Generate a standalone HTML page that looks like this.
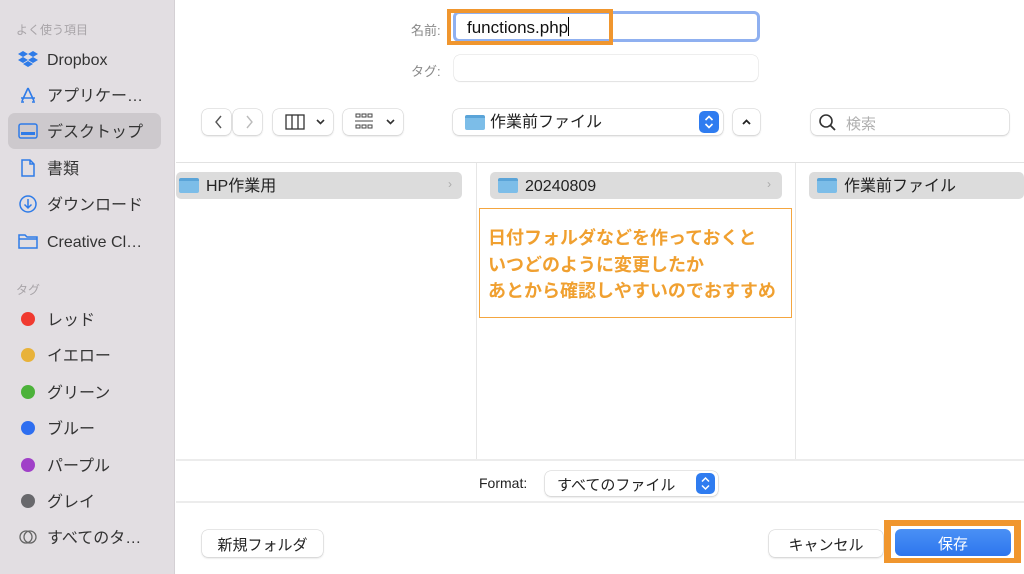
<!DOCTYPE html>
<html><head><meta charset="utf-8"><style>
*{margin:0;padding:0;box-sizing:border-box}
body{width:1024px;height:574px;overflow:hidden;background:#fff;font-family:"Liberation Sans","Noto Sans CJK JP",sans-serif;color:#222;position:relative}
.a{position:absolute}
#side{left:0;top:0;width:175px;height:574px;background:#e2dee2;border-right:1px solid #d4d0d4}
.sh{font-size:12px;color:#a8a4a8;left:16px}
.si{left:47px;font-size:16px;color:#333;line-height:20px;margin-top:2px}
.dot{left:21px;width:14px;height:14px;border-radius:50%}
.btn{background:#fff;border-radius:6px;box-shadow:0 0 0 0.5px #d0d0d0,0 1px 2px rgba(0,0,0,.18)}
.lbl{font-size:13px;color:#888}
.row{background:#dcdcdc;border-radius:5px;height:27px}
.fold{width:20px;height:15px;background:#7cbde8;border-radius:2px;border-top:3px solid #5aa4d8}
.rt{font-size:16px;color:#222;line-height:20px;margin-top:1px}
.chev{font-size:12px;color:#aaa}
.ann{color:#f0a030;font-size:18px;font-weight:bold;line-height:26.5px}
</style></head><body>
<div id="side" class="a">
<div class="a sh" style="top:21px">よく使う項目</div>
<svg class="a" style="left:18px;top:51px" width="20" height="17" viewBox="0 0 20 17"><path fill="#2e7be8" d="M5 0l5 3-5 3-5-3zM15 0l5 3-5 3-5-3zM5 6l5 3-5 3-5-3zM15 6l5 3-5 3-5-3zM5 13l5-3 5 3-5 3z"/></svg>
<div class="a si" style="top:49px">Dropbox</div>
<svg class="a" style="left:19px;top:86px" width="18" height="18" viewBox="0 0 18 18"><path fill="none" stroke="#2e7be8" stroke-width="1.6" d="M9 2L3 15M9 2l6 13M2 12h14M2 16h3M13 16h3"/></svg>
<div class="a si" style="top:85px">アプリケー…</div>
<div class="a" style="left:8px;top:113px;width:153px;height:36px;background:#cdc9cd;border-radius:7px"></div>
<svg class="a" style="left:18px;top:123px" width="20" height="16" viewBox="0 0 20 16"><rect x="1" y="1" width="18" height="14" rx="2" fill="none" stroke="#2e7be8" stroke-width="1.5"/><rect x="3" y="9" width="14" height="3" fill="#2e7be8"/></svg>
<div class="a si" style="top:121px">デスクトップ</div>
<svg class="a" style="left:21px;top:159px" width="14" height="18" viewBox="0 0 14 18"><path fill="none" stroke="#2e7be8" stroke-width="1.5" d="M1 1h8l4 4v12H1zM9 1v4h4"/></svg>
<div class="a si" style="top:158px">書類</div>
<svg class="a" style="left:19px;top:195px" width="18" height="18" viewBox="0 0 18 18"><circle cx="9" cy="9" r="8" fill="none" stroke="#2e7be8" stroke-width="1.5"/><path fill="none" stroke="#2e7be8" stroke-width="1.5" d="M9 4v9M5.5 9.5L9 13l3.5-3.5"/></svg>
<div class="a si" style="top:194px">ダウンロード</div>
<svg class="a" style="left:18px;top:233px" width="20" height="16" viewBox="0 0 20 16"><path fill="none" stroke="#2e7be8" stroke-width="1.5" d="M1 2h6l2 2h10v11H1zM1 6h18"/></svg>
<div class="a si" style="top:231px">Creative Cl…</div>
<div class="a sh" style="top:281px">タグ</div>
<div class="a dot" style="top:312px;background:#f03a30"></div><div class="a si" style="top:309px">レッド</div>
<div class="a dot" style="top:348px;background:#e8b23a"></div><div class="a si" style="top:345px">イエロー</div>
<div class="a dot" style="top:385px;background:#4cb23a"></div><div class="a si" style="top:382px">グリーン</div>
<div class="a dot" style="top:421px;background:#2e6ef0"></div><div class="a si" style="top:418px">ブルー</div>
<div class="a dot" style="top:458px;background:#a040c8"></div><div class="a si" style="top:455px">パープル</div>
<div class="a dot" style="top:494px;background:#68686c"></div><div class="a si" style="top:491px">グレイ</div>
<svg class="a" style="left:19px;top:530px" width="18" height="14" viewBox="0 0 18 14"><circle cx="7" cy="7" r="6" fill="none" stroke="#666" stroke-width="1.3"/><circle cx="11" cy="7" r="6" fill="none" stroke="#666" stroke-width="1.3"/></svg>
<div class="a si" style="top:527px">すべてのタ…</div>
</div>

<div class="a lbl" style="left:411px;top:20px">名前:</div>
<div class="a" style="left:453px;top:11px;width:307px;height:31px;border:3px solid #8fb0f0;border-radius:6px;background:#fff"></div>
<div class="a" style="left:447px;top:9px;width:166px;height:36px;border:4px solid #f0962e"></div>
<div class="a" style="left:467px;top:17px;font-size:17px;color:#111">functions.php<span style="display:inline-block;width:1px;height:19px;background:#000;vertical-align:-3px"></span></div>
<div class="a lbl" style="left:411px;top:61px">タグ:</div>
<div class="a btn" style="left:454px;top:55px;width:304px;height:26px;box-shadow:0 0 0 0.5px #ddd,0 1px 1px rgba(0,0,0,.1)"></div>

<div class="a btn" style="left:202px;top:109px;width:29px;height:26px"></div>
<div class="a btn" style="left:233px;top:109px;width:29px;height:26px"></div>
<svg class="a" style="left:210px;top:113px" width="50" height="18"><path d="M11 3L6 9l5 6" fill="none" stroke="#555" stroke-width="1.4"/><path d="M37 3l5 6-5 6" fill="none" stroke="#bbb" stroke-width="1.4"/></svg>
<div class="a btn" style="left:273px;top:109px;width:60px;height:26px"></div>
<svg class="a" style="left:285px;top:114px" width="42" height="16"><rect x="1" y="1" width="18" height="14" fill="none" stroke="#333" stroke-width="1.3"/><path d="M7 1v14M13 1v14" stroke="#333" stroke-width="1.3"/><path d="M32 6l3.5 3.5L39 6" fill="none" stroke="#333" stroke-width="1.6"/></svg>
<div class="a btn" style="left:343px;top:109px;width:60px;height:26px"></div>
<svg class="a" style="left:355px;top:113px" width="42" height="18"><g fill="none" stroke="#444" stroke-width="1"><rect x="1" y="1" width="4" height="3"/><rect x="7" y="1" width="4" height="3"/><rect x="13" y="1" width="4" height="3"/><rect x="1" y="12" width="4" height="3"/><rect x="7" y="12" width="4" height="3"/><rect x="13" y="12" width="4" height="3"/></g><path d="M0 8h18" stroke="#444"/><path d="M32 7l3.5 3.5L39 7" fill="none" stroke="#333" stroke-width="1.6"/></svg>

<div class="a btn" style="left:453px;top:109px;width:270px;height:26px"></div>
<div class="a fold" style="left:465px;top:115px"></div>
<div class="a rt" style="left:490px;top:112px">作業前ファイル</div>
<div class="a" style="left:699px;top:111px;width:20px;height:22px;background:#2f7cf0;border-radius:5px"></div>
<svg class="a" style="left:699px;top:111px" width="20" height="22"><path d="M6.5 9L10 5.5 13.5 9M6.5 13L10 16.5 13.5 13" fill="none" stroke="#fff" stroke-width="1.6"/></svg>
<div class="a btn" style="left:733px;top:109px;width:27px;height:26px"></div>
<svg class="a" style="left:733px;top:109px" width="27" height="26"><path d="M10 15l3.5-3.5L17 15" fill="none" stroke="#222" stroke-width="1.8"/></svg>
<div class="a btn" style="left:811px;top:109px;width:198px;height:26px"></div>
<svg class="a" style="left:818px;top:113px" width="20" height="20"><circle cx="8" cy="8" r="6" fill="none" stroke="#333" stroke-width="1.6"/><path d="M12.5 12.5L17 17" stroke="#333" stroke-width="1.8"/></svg>
<div class="a" style="left:846px;top:113px;font-size:15px;color:#b0b0b0">検索</div>

<div class="a" style="left:176px;top:162px;width:848px;height:1px;background:#e2e2e2"></div>
<div class="a" style="left:476px;top:163px;width:1px;height:297px;background:#e6e6e6"></div>
<div class="a" style="left:795px;top:163px;width:1px;height:297px;background:#e6e6e6"></div>
<div class="a" style="left:176px;top:459px;width:848px;height:2px;background:#ececec"></div>
<div class="a" style="left:176px;top:501px;width:848px;height:2px;background:#ececec"></div>

<div class="a row" style="left:176px;top:172px;width:286px"></div>
<div class="a fold" style="left:179px;top:178px"></div>
<div class="a rt" style="left:206px;top:176px">HP作業用</div>
<div class="a chev" style="left:448px;top:177px">›</div>
<div class="a row" style="left:490px;top:172px;width:292px"></div>
<div class="a fold" style="left:498px;top:178px"></div>
<div class="a rt" style="left:525px;top:176px">20240809</div>
<div class="a chev" style="left:767px;top:177px">›</div>
<div class="a row" style="left:809px;top:172px;width:215px"></div>
<div class="a fold" style="left:817px;top:178px"></div>
<div class="a rt" style="left:844px;top:176px">作業前ファイル</div>

<div class="a" style="left:479px;top:208px;width:313px;height:110px;border:1.5px solid #f4a640"></div>
<div class="a ann" style="left:488px;top:225px">日付フォルダなどを作っておくと<br>いつどのように変更したか<br>あとから確認しやすいのでおすすめ</div>

<div class="a" style="left:479px;top:475px;font-size:14px;color:#222">Format:</div>
<div class="a btn" style="left:545px;top:471px;width:173px;height:25px"></div>
<div class="a" style="left:557px;top:474px;font-size:15px;color:#222">すべてのファイル</div>
<div class="a" style="left:696px;top:473px;width:19px;height:21px;background:#2f7cf0;border-radius:5px"></div>
<svg class="a" style="left:696px;top:473px" width="19" height="21"><path d="M6 8.5L9.5 5 13 8.5M6 12.5L9.5 16 13 12.5" fill="none" stroke="#fff" stroke-width="1.5"/></svg>

<div class="a btn" style="left:202px;top:530px;width:121px;height:27px"></div>
<div class="a" style="left:202px;top:534px;width:121px;text-align:center;font-size:15px;color:#222">新規フォルダ</div>
<div class="a btn" style="left:769px;top:530px;width:114px;height:27px"></div>
<div class="a" style="left:769px;top:534px;width:114px;text-align:center;font-size:15px;color:#222">キャンセル</div>
<div class="a" style="left:884px;top:520px;width:137px;height:43px;background:#f0962e"></div>
<div class="a" style="left:891px;top:526px;width:123px;height:32px;background:#fff"></div>
<div class="a" style="left:895px;top:529px;width:116px;height:27px;background:linear-gradient(#4a90f5,#2d76ee);border-radius:6px"></div>
<div class="a" style="left:895px;top:533px;width:116px;text-align:center;font-size:15px;color:#fff">保存</div>
</body></html>
